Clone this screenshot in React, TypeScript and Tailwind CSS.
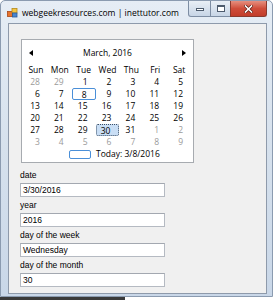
import React from "react";

const days = ["Sun", "Mon", "Tue", "Wed", "Thu", "Fri", "Sat"];

type Cell = { n: number; muted?: boolean };

const weeks: Cell[][] = [
  [{ n: 28, muted: true }, { n: 29, muted: true }, { n: 1 }, { n: 2 }, { n: 3 }, { n: 4 }, { n: 5 }],
  [6, 7, 8, 9, 10, 11, 12].map((n) => ({ n })),
  [13, 14, 15, 16, 17, 18, 19].map((n) => ({ n })),
  [20, 21, 22, 23, 24, 25, 26].map((n) => ({ n })),
  [{ n: 27 }, { n: 28 }, { n: 29 }, { n: 30 }, { n: 31 }, { n: 1, muted: true }, { n: 2, muted: true }],
  [3, 4, 5, 6, 7, 8, 9].map((n) => ({ n, muted: true })),
];

function DayCell({ cell, row }: { cell: Cell; row: number }) {
  const today = row === 1 && cell.n === 8;
  const selected = row === 4 && cell.n === 30;
  let cls = "h-[12px] w-[24px] pr-[8px] text-right leading-[12px]";
  if (cell.muted) cls += " text-[#9a9a9a]";
  else cls += " text-black";
  if (today) cls += " rounded-[2px] border border-[#4a8fd8] pr-[7px] leading-[10px] text-[#3576c4]";
  if (selected) cls += " rounded-[2px] border border-dotted border-[#3c4f66] bg-[#c9def5] pr-[7px] leading-[10px]";
  return <div className={cls}>{cell.n}</div>;
}

function Field({ label, value }: { label: string; value: string }) {
  return (
    <div>
      <div className="h-[16px] leading-[16px] text-black">{label}</div>
      <div className="h-[14px] w-[145px] border border-[#b5bac2] border-t-[#a3a8b0] bg-white pl-[2px] leading-[12px] text-black">
        {value}
      </div>
    </div>
  );
}

export default function App() {
  return (
    <div className="relative h-[300px] w-[273px] overflow-hidden bg-white">
      <div className="flex h-[297px] w-[273px] flex-col rounded-t-[5px] border border-[#8b9bb0] bg-gradient-to-b from-[#e6edf5] via-[#d6e1ed] to-[#c9d7e8]">
        {/* title bar */}
        <div className="relative flex h-[22px] items-center pl-[6px]">
          <svg width="11" height="10" viewBox="0 0 11 10" className="mt-[2px]">
            <rect x="0.5" y="3.5" width="5" height="5" fill="#e8742b" stroke="#a9481a" strokeWidth="0.8" />
            <rect x="5" y="0.5" width="5" height="4.5" fill="#f5c542" stroke="#b38919" strokeWidth="0.8" />
            <rect x="5.5" y="5" width="4.5" height="4" fill="#4a86d0" stroke="#2b5c99" strokeWidth="0.8" />
          </svg>
          <span className="ml-[4px] mt-[3px] text-[8.5px] text-black" style={{ fontFamily: '"Open Sans", sans-serif' }}>
            webgeekresources.com | inettutor.com
          </span>
          <div className="absolute right-[5px] top-0 flex h-[16px]">
            <div className="flex w-[23px] items-center justify-center rounded-bl-[3px] border border-t-0 border-[#7d8da3] bg-gradient-to-b from-[#e9eff6] to-[#c7d5e6]">
              <div className="mt-[2px] h-[3px] w-[8px] border border-[#4d5b6d] bg-white" />
            </div>
            <div className="flex w-[19px] items-center justify-center border-b border-[#7d8da3] bg-gradient-to-b from-[#e9eff6] to-[#c7d5e6]">
              <div className="h-[7px] w-[8px] border border-t-[2px] border-[#4d5b6d] bg-white" />
            </div>
            <div className="flex w-[37px] items-center justify-center rounded-br-[3px] border border-t-0 border-[#8a3a2e] bg-gradient-to-b from-[#e58f7f] via-[#cf4d3a] to-[#c23d2a]">
              <svg width="9" height="8" viewBox="0 0 9 8">
                <path d="M1.5 1 L7.5 7 M7.5 1 L1.5 7" stroke="#5a1a10" strokeWidth="3" strokeLinecap="square" />
                <path d="M1.5 1 L7.5 7 M7.5 1 L1.5 7" stroke="#ffffff" strokeWidth="1.6" strokeLinecap="square" />
              </svg>
            </div>
          </div>
        </div>

        {/* client area */}
        <div className="ml-[7px] h-[271px] w-[259px] border border-[#8e9aab] bg-[#f0f0f0] pl-[11px] pt-[15px]">
          <div
            className="ml-[1px] h-[124px] w-[173px] border border-[#a7abb0] bg-white px-[2px] text-[8.5px]"
            style={{ fontFamily: '"Open Sans", sans-serif' }}
          >
            <div className="flex h-[24px] items-center justify-between px-[5px] pt-[2px]">
              <svg width="4" height="6" viewBox="0 0 4 6">
                <path d="M4 0 L0 3 L4 6 Z" fill="#000" />
              </svg>
              <span className="text-black">March, 2016</span>
              <svg width="4" height="6" viewBox="0 0 4 6">
                <path d="M0 0 L4 3 L0 6 Z" fill="#000" />
              </svg>
            </div>
            <div className="flex">
              {days.map((d) => (
                <div key={d} className="h-[12px] w-[24px] text-center leading-[12px] text-black">
                  {d}
                </div>
              ))}
            </div>
            {weeks.map((w, i) => (
              <div key={i} className="flex">
                {w.map((c, j) => (
                  <DayCell key={j} cell={c} row={i} />
                ))}
              </div>
            ))}
            <div className="flex h-[10px] items-center pl-[45px] pt-[2px]">
              <div className="h-[9px] w-[22px] rounded-[2px] border border-[#4a8fd8]" />
              <span className="ml-[5px] leading-[10px] text-black">Today: 3/8/2016</span>
            </div>
          </div>

          <div className="mt-[4px] text-[8.5px]" style={{ fontFamily: '"Liberation Sans", Arial, sans-serif' }}>
            <Field label="date" value="3/30/2016" />
            <Field label="year" value="2016" />
            <Field label="day of the week" value="Wednesday" />
            <Field label="day of the month" value="30" />
          </div>
        </div>
      </div>
      <div className="absolute bottom-0 left-0 h-[3px] w-[125px] bg-[#3a3a3a]" />
    </div>
  );
}
